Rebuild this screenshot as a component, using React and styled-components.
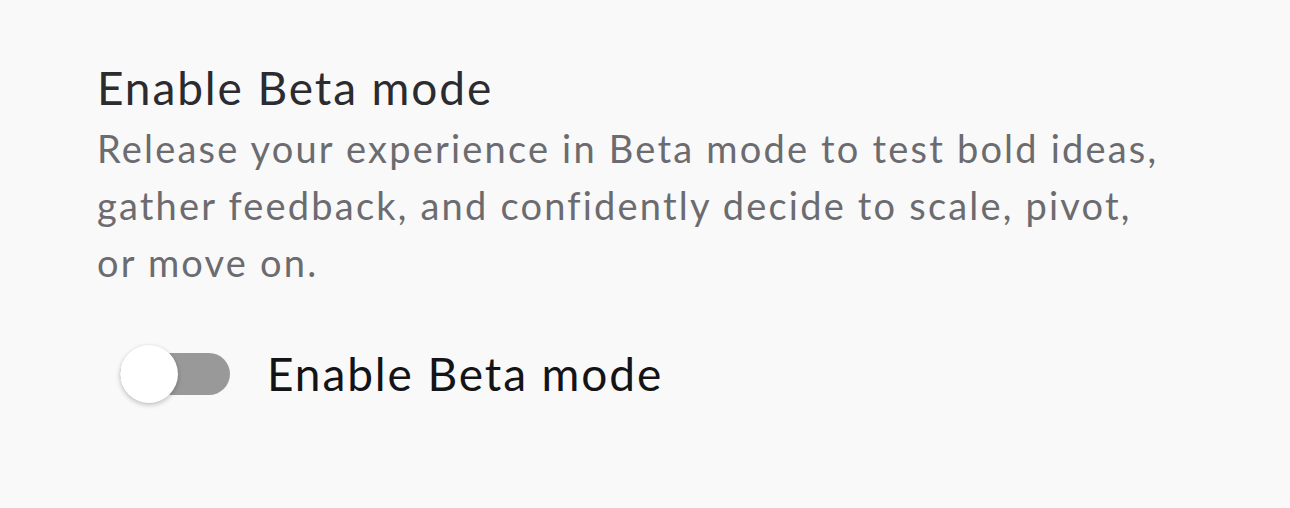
import React, { useState } from "react";
import styled, { createGlobalStyle } from "styled-components";

const GlobalStyle = createGlobalStyle`
  html, body {
    margin: 0;
    background: #f9f9f9;
  }
  body {
    font-family: Lato, "Noto Sans", sans-serif;
  }
`;

const Page = styled.div`
  height: 508px;
  padding: 59px 97px 0;
  box-sizing: border-box;
`;

const Title = styled.h2`
  margin: 0;
  font-weight: 400;
  font-size: 46px;
  line-height: 58px;
  letter-spacing: 1.9px;
  color: #2b2b30;
`;

const Desc = styled.p`
  margin: 3px 0 0;
  max-width: 1100px;
  font-size: 38px;
  line-height: 57px;
  letter-spacing: 2.2px;
  color: #6b6b70;
`;

const ToggleRow = styled.label`
  display: flex;
  align-items: center;
  gap: 37px;
  margin: 55px 0 0 23px;
  cursor: pointer;
`;

const Track = styled.span`
  position: relative;
  display: inline-block;
  width: 110px;
  height: 42px;
  border-radius: 21px;
  background: ${(p) => (p.$on ? "#4a7cf6" : "#999999")};
`;

const Thumb = styled.span`
  position: absolute;
  top: -8px;
  left: ${(p) => (p.$on ? "52px" : "0")};
  width: 58px;
  height: 58px;
  border-radius: 50%;
  background: #fff;
  box-shadow: 0 2px 5px rgba(0, 0, 0, 0.22), 0 0 2px rgba(0, 0, 0, 0.08);
`;

const Label = styled.span`
  font-size: 46px;
  letter-spacing: 1.9px;
  color: #141416;
`;

const description =
  "Release your experience in Beta mode to test bold ideas, gather feedback, and confidently decide to scale, pivot, or\u00a0move on.";

export default function App() {
  const [on, setOn] = useState(false);
  return (
    <>
      <GlobalStyle />
      <Page>
        <Title>Enable Beta mode</Title>
        <Desc>{description}</Desc>
        <ToggleRow onClick={() => setOn(!on)}>
          <Track $on={on}>
            <Thumb $on={on} />
          </Track>
          <Label>Enable Beta mode</Label>
        </ToggleRow>
      </Page>
    </>
  );
}
